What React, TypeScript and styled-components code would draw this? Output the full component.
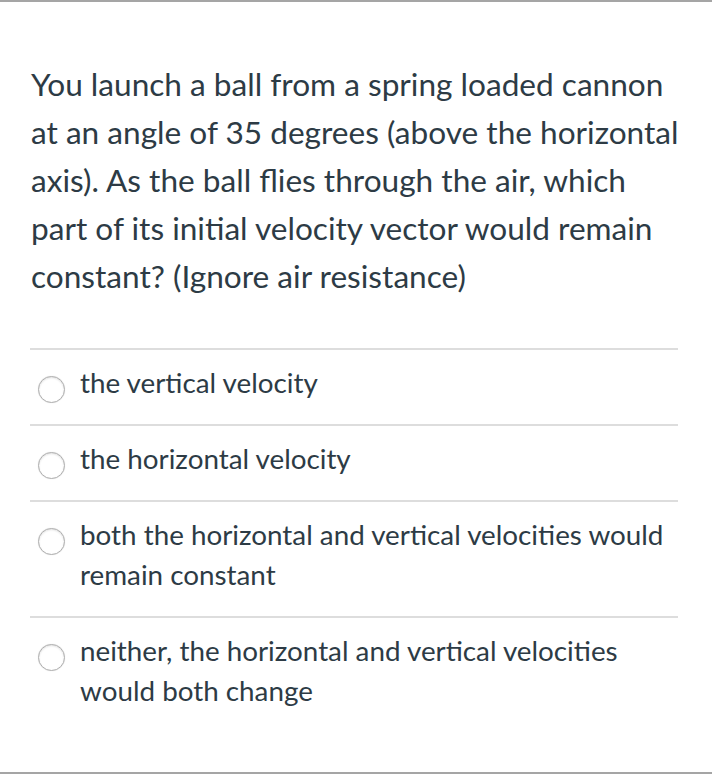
import React from "react";
import styled, { createGlobalStyle } from "styled-components";

const GlobalStyle = createGlobalStyle`
  html, body {
    margin: 0;
    padding: 0;
    background: #ffffff;
  }
  body {
    font-family: Lato, "Noto Sans", sans-serif;
    color: #2d3b45;
  }
`;

const Card = styled.section`
  box-sizing: border-box;
  width: 712px;
  height: 774px;
  border-top: 2px solid #a5a5a5;
  border-bottom: 2px solid #a5a5a5;
  background: #fff;
  display: flex;
  flex-direction: column;
`;

const Question = styled.div`
  padding: 58px 31px 0 31px;
  font-size: 31.6px;
  line-height: 48px;
  margin-bottom: 48px;
`;

const Answers = styled.ul`
  list-style: none;
  margin: 0 34px 0 30px;
  padding: 0;
`;

const Answer = styled.li`
  display: flex;
  align-items: flex-start;
  border-top: 2px solid #dddddd;
  padding: 13px 0 21px;
`;

const Radio = styled.span`
  box-sizing: border-box;
  flex: none;
  width: 27px;
  height: 27px;
  margin: 13px 15px 0 8px;
  border-radius: 50%;
  border: 1.5px solid #b0b0b0;
  background: #fff;
  box-shadow: inset 0 1px 2px rgba(0, 0, 0, 0.12), 0 0 1px rgba(0, 0, 0, 0.15);
`;

const Label = styled.span`
  font-size: 27.8px;
  line-height: 40px;
`;

const options = [
  "the vertical velocity",
  "the horizontal velocity",
  "both the horizontal and vertical velocities would remain constant",
  "neither, the horizontal and vertical velocities would both change",
];

export default function App() {
  return (
    <>
      <GlobalStyle />
      <Card>
        <Question>
          You launch a ball from a spring loaded cannon at an angle of 35
          degrees (above the horizontal axis). As the ball flies through the
          air, which part of its initial velocity vector would remain
          constant? (Ignore air resistance)
        </Question>
        <Answers>
          {options.map((o) => (
            <Answer key={o}>
              <Radio />
              <Label>{o}</Label>
            </Answer>
          ))}
        </Answers>
      </Card>
    </>
  );
}
